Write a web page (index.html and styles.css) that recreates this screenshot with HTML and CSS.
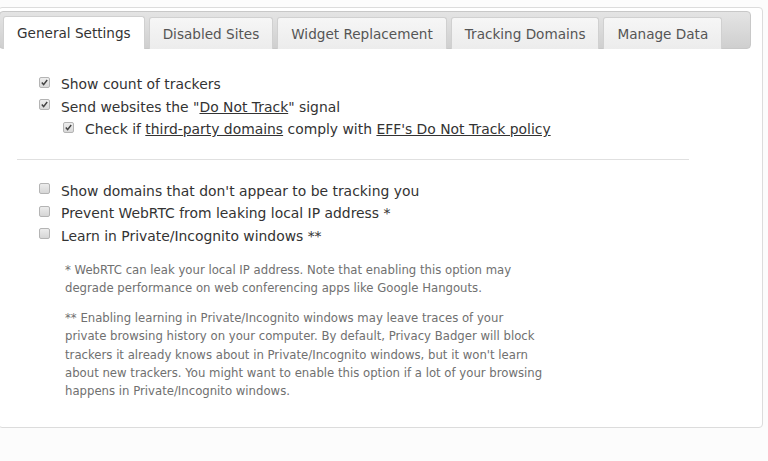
FILE: index.html
```html
<!DOCTYPE html>
<html>
<head>
<meta charset="utf-8">
<link rel="stylesheet" href="styles.css">
</head>
<body>
<div class="widget">
  <ul class="tabbar">
    <li class="tab active">General Settings</li>
    <li class="tab">Disabled Sites</li>
    <li class="tab">Widget Replacement</li>
    <li class="tab">Tracking Domains</li>
    <li class="tab">Manage Data</li>
  </ul>
  <div class="panel">
    <div class="group">
      <label class="row"><input type="checkbox" checked disabled><span>Show count of trackers</span></label>
      <label class="row"><input type="checkbox" checked disabled><span>Send websites the "<a href="#">Do Not Track</a>" signal</span></label>
      <label class="row sub"><input type="checkbox" checked disabled><span>Check if <a href="#">third-party domains</a> comply with <a href="#">EFF's Do Not Track policy</a></span></label>
    </div>
    <hr class="divider">
    <div class="group second">
      <label class="row"><input type="checkbox" disabled><span>Show domains that don't appear to be tracking you</span></label>
      <label class="row"><input type="checkbox" disabled><span>Prevent WebRTC from leaking local IP address *</span></label>
      <label class="row"><input type="checkbox" disabled><span>Learn in Private/Incognito windows **</span></label>
    </div>
    <div class="notes">
      <p>* WebRTC can leak your local IP address. Note that enabling this option may degrade performance on web conferencing apps like Google Hangouts.</p>
      <p>** Enabling learning in Private/Incognito windows may leave traces of your private browsing history on your computer. By default, Privacy Badger will block trackers it already knows about in Private/Incognito windows, but it won't learn about new trackers. You might want to enable this option if a lot of your browsing happens in Private/Incognito windows.</p>
    </div>
  </div>
</div>
</body>
</html>
```
FILE: styles.css
```css
html, body {
  margin: 0;
  padding: 0;
  background: #fcfcfc;
  font-family: "DejaVu Sans", Verdana, sans-serif;
  color: #333;
}
.widget {
  margin: 7px 0 0 -2px;
  width: 765px;
  height: 421px;
  box-sizing: border-box;
  border: 1px solid #dcdcdc;
  border-radius: 4px;
  background: #fff;
  padding: 3px 0 0 0;
}
.tabbar {
  list-style: none;
  margin: 0;
  padding: 4px 0 0 3px;
  height: 38px;
  box-sizing: border-box;
  width: 752px;
  border: 1px solid #c8c8c8;
  border-radius: 4px;
  background: linear-gradient(to bottom, #e4e4e4, #cfcfcf);
  display: flex;
  align-items: flex-end;
  gap: 4px;
}
.tab {
  height: 32px;
  box-sizing: border-box;
  padding: 0 13px;
  display: flex;
  align-items: center;
  font-size: 13.6px;
  color: #555;
  border: 1px solid #d0d0d0;
  border-bottom: none;
  border-radius: 3px 3px 0 0;
  background: linear-gradient(to bottom, #f6f6f6, #ececec);
  margin-bottom: -1px;
}
.tab.active {
  background: #fff;
  color: #333;
  height: 33px;
}
.panel {
  padding: 24px 0 0 0;
}
.group {
  display: flex;
  flex-direction: column;
  padding-left: 40px;
}
.row {
  display: flex;
  align-items: center;
  height: 22.5px;
  font-size: 13.9px;
  color: #333;
}
.row.sub {
  padding-left: 24px;
}
.row input {
  -webkit-appearance: none;
  appearance: none;
  margin: 0 11px 4px 0;
  width: 11px;
  height: 11px;
  box-sizing: border-box;
  border: 1px solid #b4b4b4;
  border-radius: 2px;
  background: linear-gradient(to bottom, #ececec, #d6d6d6);
}
.row input:checked {
  background: url("data:image/svg+xml;utf8,<svg xmlns='http://www.w3.org/2000/svg' viewBox='0 0 9 9'><path d='M1.8 4.6 L3.6 6.6 L7.2 2' fill='none' stroke='%23444' stroke-width='1.5'/></svg>") center / 9px 9px no-repeat, linear-gradient(to bottom, #eeeeee, #d9d9d9);
}
.row a {
  color: #333;
}
.divider {
  border: none;
  border-top: 1px solid #e0e0e0;
  margin: 18px 0 0 18px;
  width: 672px;
}
.group.second {
  padding-top: 20px;
}
.notes {
  padding: 14px 0 0 66px;
  width: 480px;
  font-size: 11.7px;
  line-height: 18.3px;
  color: #707070;
}
.notes p {
  margin: 0 0 11.5px 0;
}
```
